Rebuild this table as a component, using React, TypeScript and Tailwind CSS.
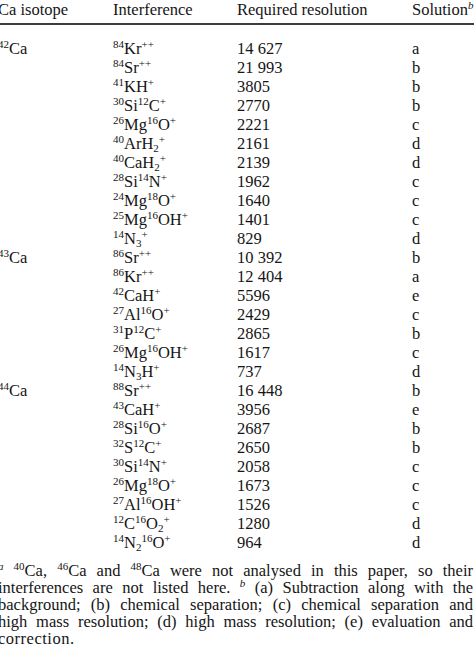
import React from "react";

type Row = { iso?: string; intf: string; res: string; sol: string };

const rows: Row[] = [
  { iso: "42", intf: "^{84}Kr^{++}", res: "14 627", sol: "a" },
  { intf: "^{84}Sr^{++}", res: "21 993", sol: "b" },
  { intf: "^{41}KH^{+}", res: "3805", sol: "b" },
  { intf: "^{30}Si^{12}C^{+}", res: "2770", sol: "b" },
  { intf: "^{26}Mg^{16}O^{+}", res: "2221", sol: "c" },
  { intf: "^{40}ArH_{2}^{+}", res: "2161", sol: "d" },
  { intf: "^{40}CaH_{2}^{+}", res: "2139", sol: "d" },
  { intf: "^{28}Si^{14}N^{+}", res: "1962", sol: "c" },
  { intf: "^{24}Mg^{18}O^{+}", res: "1640", sol: "c" },
  { intf: "^{25}Mg^{16}OH^{+}", res: "1401", sol: "c" },
  { intf: "^{14}N_{3}^{+}", res: "829", sol: "d" },
  { iso: "43", intf: "^{86}Sr^{++}", res: "10 392", sol: "b" },
  { intf: "^{86}Kr^{++}", res: "12 404", sol: "a" },
  { intf: "^{42}CaH^{+}", res: "5596", sol: "e" },
  { intf: "^{27}Al^{16}O^{+}", res: "2429", sol: "c" },
  { intf: "^{31}P^{12}C^{+}", res: "2865", sol: "b" },
  { intf: "^{26}Mg^{16}OH^{+}", res: "1617", sol: "c" },
  { intf: "^{14}N_{3}H^{+}", res: "737", sol: "d" },
  { iso: "44", intf: "^{88}Sr^{++}", res: "16 448", sol: "b" },
  { intf: "^{43}CaH^{+}", res: "3956", sol: "e" },
  { intf: "^{28}Si^{16}O^{+}", res: "2687", sol: "b" },
  { intf: "^{32}S^{12}C^{+}", res: "2650", sol: "b" },
  { intf: "^{30}Si^{14}N^{+}", res: "2058", sol: "c" },
  { intf: "^{26}Mg^{18}O^{+}", res: "1673", sol: "c" },
  { intf: "^{27}Al^{16}OH^{+}", res: "1526", sol: "c" },
  { intf: "^{12}C^{16}O_{2}^{+}", res: "1280", sol: "d" },
  { intf: "^{14}N_{2}^{16}O^{+}", res: "964", sol: "d" },
];

function Sup({ children, italic }: { children: React.ReactNode; italic?: boolean }) {
  return (
    <span
      className={
        "relative -top-[6px] text-[11px] leading-none" + (italic ? " italic" : "")
      }
    >
      {children}
    </span>
  );
}

function Sub({ children }: { children: React.ReactNode }) {
  return <span className="relative top-[3px] text-[11px] leading-none">{children}</span>;
}

function Formula({ s }: { s: string }) {
  const parts = s.split(/(\^\{[^}]*\}|_\{[^}]*\})/).filter((p) => p.length > 0);
  return (
    <>
      {parts.map((p, i) => {
        if (p.startsWith("^{")) return <Sup key={i}>{p.slice(2, -1)}</Sup>;
        if (p.startsWith("_{")) return <Sub key={i}>{p.slice(2, -1)}</Sub>;
        return <span key={i}>{p}</span>;
      })}
    </>
  );
}

export default function App() {
  return (
    <div
      className="w-[474px] h-[645px] overflow-hidden bg-white text-[#151515]"
      style={{ fontFamily: '"Liberation Serif", "Times New Roman", serif' }}
    >
      <div className="-ml-[2px] w-[480px] text-[16.5px]">
        <div className="grid grid-cols-[115px_124px_175px_1fr] h-[20px] leading-[20px] whitespace-nowrap">
          <div>Ca isotope</div>
          <div>Interference</div>
          <div>Required resolution</div>
          <div>
            Solution<Sup italic>b</Sup>
          </div>
        </div>
        <div className="mt-[3px] h-[2px] bg-[#3c3c3c]" />
        <div className="pt-[13.5px]">
          {rows.map((r, i) => (
            <div
              key={i}
              className="grid grid-cols-[115px_124px_175px_1fr] h-[19px] leading-[19px] whitespace-nowrap"
            >
              <div>
                {r.iso ? (
                  <>
                    <Sup>{r.iso}</Sup>Ca
                  </>
                ) : null}
              </div>
              <div>
                <Formula s={r.intf} />
              </div>
              <div>{r.res}</div>
              <div>{r.sol}</div>
            </div>
          ))}
        </div>
      </div>
      <div className="-ml-[2px] w-[475px] mt-[11.5px] text-[16.5px] leading-[16.9px] text-justify whitespace-nowrap">
        <div className="[text-align-last:justify]">
          <Sup italic>a</Sup> <Sup>40</Sup>Ca, <Sup>46</Sup>Ca and <Sup>48</Sup>Ca were not analysed in this paper, so their
        </div>
        <div className="[text-align-last:justify]">
          interferences are not listed here. <Sup italic>b</Sup> (a) Subtraction along with the
        </div>
        <div className="[text-align-last:justify]">
          background; (b) chemical separation; (c) chemical separation and
        </div>
        <div className="[text-align-last:justify]">
          high mass resolution; (d) high mass resolution; (e) evaluation and
        </div>
        <div className="[text-align-last:left] tracking-[0.5px]">correction.</div>
      </div>
    </div>
  );
}
